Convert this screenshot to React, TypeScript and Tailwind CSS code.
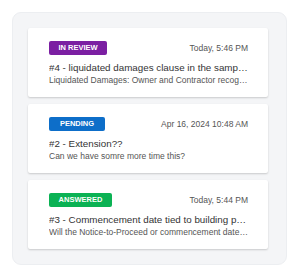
const items = [
  {
    status: 'IN REVIEW',
    badge: 'bg-[#7b1fa2] w-[58px]',
    date: 'Today, 5:46 PM',
    title: '#4 - liquidated damages clause in the sample contract',
    body: 'Liquidated Damages: Owner and Contractor recognize that time is of the essence',
  },
  {
    status: 'PENDING',
    badge: 'bg-[#0d6ec9] w-[56px]',
    date: 'Apr 16, 2024 10:48 AM',
    title: '#2 - Extension??',
    body: 'Can we have somre more time this?',
  },
  {
    status: 'ANSWERED',
    badge: 'bg-[#0bb254] w-[63px]',
    date: 'Today, 5:44 PM',
    title: '#3 - Commencement date tied to building permit issuance',
    body: 'Will the Notice-to-Proceed or commencement date be tied to the permit?',
  },
]

export default function App() {
  return (
    <div className="w-[300px] h-[278px] bg-white pt-3 pl-3 font-['Liberation_Sans',Arial,sans-serif]">
      <div className="w-[275px] h-[253px] rounded-[9px] bg-[#f4f5f7] border border-[#eceef1] pt-[15px] pl-[15px] flex flex-col gap-[7px]">
        {items.map((it) => (
          <div
            key={it.title}
            className="w-[240px] h-[69px] bg-white rounded-[2px] shadow-[0_1px_2px_rgba(0,0,0,0.18)] pt-[13px] pl-[21px] pr-[20px]"
          >
            <div className="flex items-center justify-between">
              <span
                className={`${it.badge} h-[14px] rounded-[2px] flex items-center justify-center text-white text-[7.5px] font-bold leading-none`}
              >
                {it.status}
              </span>
              <span className="text-[8.5px] text-[#555] leading-none">{it.date}</span>
            </div>
            <div className="mt-[6px] text-[9.8px] text-[#333] leading-[13px] truncate">{it.title}</div>
            <div className="text-[8.5px] text-[#555] leading-[12px] truncate">{it.body}</div>
          </div>
        ))}
      </div>
    </div>
  )
}
